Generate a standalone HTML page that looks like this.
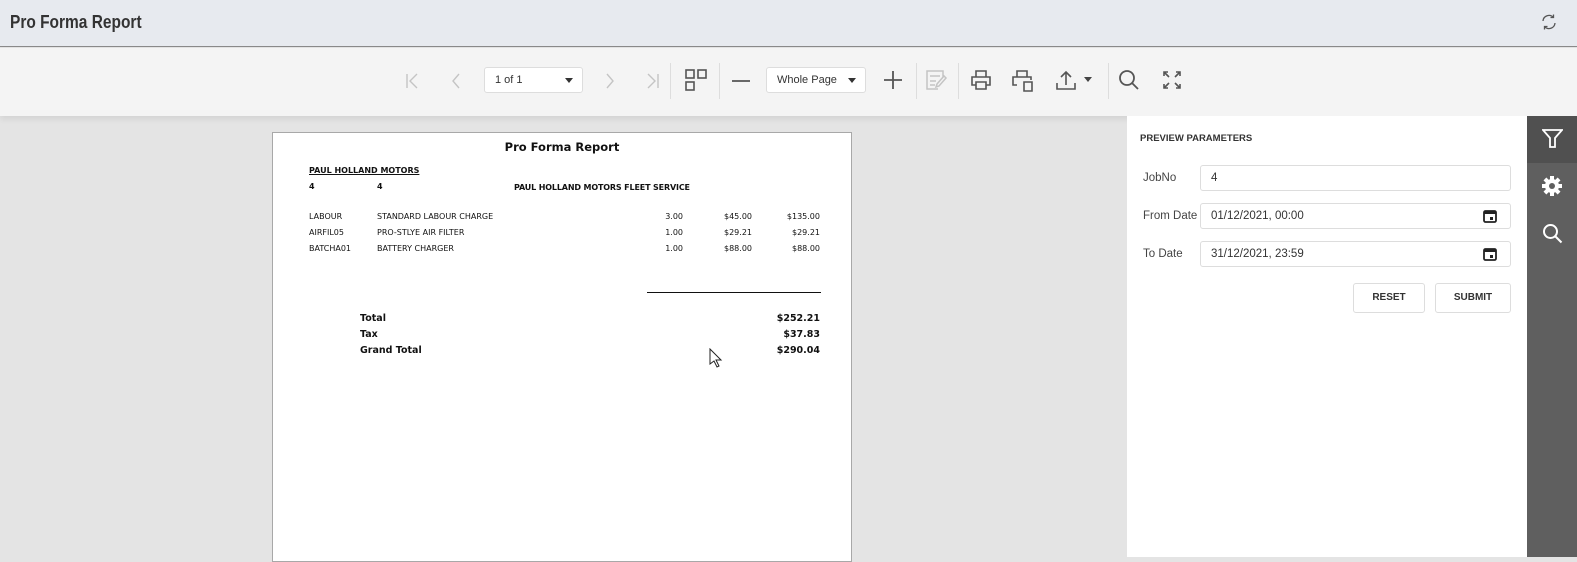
<!DOCTYPE html>
<html><head><meta charset="utf-8"><style>
*{margin:0;padding:0;box-sizing:border-box}
body{width:1577px;height:557px;overflow:hidden;position:relative;background:#e4e4e4;font-family:"Liberation Sans",sans-serif;color:#333}
.a{position:absolute}
#title{left:0;top:0;width:1577px;height:47px;background:#e7eaef;border-bottom:1px solid #8a8a8a}
#title span{position:absolute;left:10px;top:12px;font-size:18px;font-weight:bold;color:#333;transform:scaleX(.86);transform-origin:left;white-space:nowrap}
#tb{left:0;top:48px;width:1577px;height:68px;background:#f4f4f4;box-shadow:0 3px 6px rgba(0,0,0,.08)}
.sel{position:absolute;top:19px;height:26px;background:#fff;border:1px solid #ddd;border-radius:3px;font-size:11px;padding:6px 10px;color:#333}
.sel:after{content:"";position:absolute;right:9px;top:10px;border:4px solid transparent;border-top:5px solid #333}
.sep{position:absolute;top:15px;width:1px;height:36px;background:#ddd}
svg.i{position:absolute}
#page{left:272px;top:132px;width:580px;height:430px;background:#fff;border:1px solid #a8a8a8}
.r{position:absolute;font-family:"DejaVu Sans",sans-serif;font-size:8px;color:#111;white-space:nowrap}
.b{font-weight:bold}
.rt{text-align:right}
#panel{left:1127px;top:116px;width:400px;height:441px;background:#fff}
.lab{position:absolute;left:16px;font-size:11.5px;color:#444}
.inp{position:absolute;left:73px;width:311px;height:26px;border:1px solid #ddd;border-radius:3px;font-size:11.5px;padding:6px 10px;color:#333}
.btn{position:absolute;top:167px;height:30px;border:1px solid #ddd;border-radius:3px;font-size:10px;font-weight:bold;text-align:center;line-height:28px;color:#333}
#side{left:1527px;top:116px;width:50px;height:441px;background:#5f5f5f}
</style></head><body>
<div id="title" class="a"><span>Pro Forma Report</span>
<svg class="i" style="left:1540px;top:13px" width="18" height="18" viewBox="0 0 18 18" fill="none" stroke="#555" stroke-width="1.3"><path d="M3 8a6 6 0 0 1 10.5-3.5M15 10a6 6 0 0 1-10.5 3.5"/><path d="M13.5 1.5v3h-3M4.5 16.5v-3h3"/></svg>
</div>
<div id="tb" class="a">
<svg class="i" style="left:405px;top:24px" width="16" height="18" viewBox="0 0 16 18" fill="none" stroke="#c4c4c4" stroke-width="1.4"><path d="M2 2v14M12 2L5 9l7 7"/></svg>
<svg class="i" style="left:450px;top:24px" width="12" height="18" viewBox="0 0 12 18" fill="none" stroke="#c4c4c4" stroke-width="1.4"><path d="M9 2L3 9l6 7"/></svg>
<div class="sel" style="left:484px;width:99px">1 of 1</div>
<svg class="i" style="left:604px;top:24px" width="12" height="18" viewBox="0 0 12 18" fill="none" stroke="#c4c4c4" stroke-width="1.4"><path d="M3 2l6 7-6 7"/></svg>
<svg class="i" style="left:644px;top:24px" width="16" height="18" viewBox="0 0 16 18" fill="none" stroke="#c4c4c4" stroke-width="1.4"><path d="M14 2v14M4 2l7 7-7 7"/></svg>
<div class="sep" style="left:670px"></div>
<svg class="i" style="left:684px;top:20px" width="24" height="24" viewBox="0 0 24 24" fill="none" stroke="#555" stroke-width="1.6"><rect x="2" y="2" width="8" height="8"/><rect x="14" y="2" width="8" height="8"/><rect x="2" y="14" width="8" height="8"/></svg>
<div class="sep" style="left:719px"></div>
<svg class="i" style="left:731px;top:24px" width="20" height="18" viewBox="0 0 20 18" stroke="#555" stroke-width="1.8"><path d="M1 9h18"/></svg>
<div class="sel" style="left:766px;width:100px">Whole Page</div>
<svg class="i" style="left:883px;top:22px" width="20" height="20" viewBox="0 0 20 20" stroke="#555" stroke-width="1.8"><path d="M1 10h18M10 1v18"/></svg>
<div class="sep" style="left:916px"></div>
<svg class="i" style="left:925px;top:21px" width="24" height="22" viewBox="0 0 24 22" fill="none" stroke="#c4c4c4" stroke-width="1.5"><path d="M13 20H2V2h16v6M5 7h10M5 12h6M5 16h5M21 9l-7 8-3 1 1-3 7-8z"/></svg>
<div class="sep" style="left:958px"></div>
<svg class="i" style="left:970px;top:21px" width="22" height="22" viewBox="0 0 22 22" fill="none" stroke="#555" stroke-width="1.6"><path d="M6 8V2h10v6M6 16H2V8h18v8h-4M6 13h10v7H6z"/></svg>
<svg class="i" style="left:1012px;top:21px" width="24" height="24" viewBox="0 0 24 24" fill="none" stroke="#555" stroke-width="1.6"><path d="M5 8V2h10v6M5 16H1V8h18v3M12 13h8v9h-8z"/></svg>
<svg class="i" style="left:1055px;top:21px" width="24" height="22" viewBox="0 0 24 22" fill="none" stroke="#555" stroke-width="1.6"><path d="M2 14v6h18v-6M11 16V3M6 8l5-5 5 5"/></svg>
<svg class="i" style="left:1084px;top:29px" width="8" height="6" viewBox="0 0 8 6"><path d="M0 0h8L4 5z" fill="#444"/></svg>
<div class="sep" style="left:1108px"></div>
<svg class="i" style="left:1118px;top:21px" width="22" height="22" viewBox="0 0 22 22" fill="none" stroke="#555" stroke-width="1.8"><circle cx="9" cy="9" r="7"/><path d="M14 14l6 6"/></svg>
<svg class="i" style="left:1162px;top:22px" width="20" height="20" viewBox="0 0 20 20" fill="none" stroke="#555" stroke-width="1.6"><path d="M2 6V2h4M2 2l5 5M18 6V2h-4M18 2l-5 5M2 14v4h4M2 18l5-5M18 14v4h-4M18 18l-5-5"/></svg>
</div>

<div id="page" class="a">
<div class="r b" style="left:0;width:578px;text-align:center;top:7px;font-size:11.5px">Pro Forma Report</div>
<div class="r b" style="left:36px;top:33px;text-decoration:underline">PAUL HOLLAND MOTORS</div>
<div class="r b" style="left:36px;top:49px">4</div>
<div class="r b" style="left:104px;top:49px">4</div>
<div class="r b" style="left:241px;top:50px;letter-spacing:-0.15px">PAUL HOLLAND MOTORS FLEET SERVICE</div>
<div class="r" style="left:36px;top:79px">LABOUR</div><div class="r" style="left:104px;top:79px">STANDARD LABOUR CHARGE</div>
<div class="r rt" style="right:168px;top:79px">3.00</div><div class="r rt" style="right:99px;top:79px">$45.00</div><div class="r rt" style="right:31px;top:79px">$135.00</div>
<div class="r" style="left:36px;top:95px">AIRFIL05</div><div class="r" style="left:104px;top:95px">PRO-STLYE AIR FILTER</div>
<div class="r rt" style="right:168px;top:95px">1.00</div><div class="r rt" style="right:99px;top:95px">$29.21</div><div class="r rt" style="right:31px;top:95px">$29.21</div>
<div class="r" style="left:36px;top:111px">BATCHA01</div><div class="r" style="left:104px;top:111px">BATTERY CHARGER</div>
<div class="r rt" style="right:168px;top:111px">1.00</div><div class="r rt" style="right:99px;top:111px">$88.00</div><div class="r rt" style="right:31px;top:111px">$88.00</div>
<div class="a" style="left:374px;top:159px;width:174px;height:1px;background:#111"></div>
<div class="r b" style="left:87px;top:180px;font-size:9.5px">Total</div><div class="r b rt" style="right:31px;top:180px;font-size:9.5px">$252.21</div>
<div class="r b" style="left:87px;top:196px;font-size:9.5px">Tax</div><div class="r b rt" style="right:31px;top:196px;font-size:9.5px">$37.83</div>
<div class="r b" style="left:87px;top:212px;font-size:9.5px">Grand Total</div><div class="r b rt" style="right:31px;top:212px;font-size:9.5px">$290.04</div>
<svg class="a" style="left:436px;top:215px" width="14" height="20" viewBox="0 0 14 20"><path d="M1 1v15l4-3 3 6 2-1-3-6h5z" fill="#fff" stroke="#222" stroke-width="1"/></svg>
</div>

<div id="panel" class="a">
<div class="a" style="left:13px;top:17px;font-size:9.5px;font-weight:bold;color:#333">PREVIEW PARAMETERS</div>
<div class="lab" style="top:56px">JobNo</div><div class="inp" style="top:49px">4</div>
<div class="lab" style="top:94px">From Date</div><div class="inp" style="top:87px">01/12/2021, 00:00</div>
<div class="lab" style="top:132px">To Date</div><div class="inp" style="top:125px">31/12/2021, 23:59</div>
<svg class="a" style="left:356px;top:93px" width="14" height="14" viewBox="0 0 14 14"><rect x="1" y="2" width="12" height="11" rx="1.5" fill="none" stroke="#222" stroke-width="1.8"/><rect x="1" y="2" width="12" height="3" fill="#222"/><rect x="7" y="8" width="3" height="3" fill="#222"/></svg>
<svg class="a" style="left:356px;top:131px" width="14" height="14" viewBox="0 0 14 14"><rect x="1" y="2" width="12" height="11" rx="1.5" fill="none" stroke="#222" stroke-width="1.8"/><rect x="1" y="2" width="12" height="3" fill="#222"/><rect x="7" y="8" width="3" height="3" fill="#222"/></svg>
<div class="btn" style="left:226px;width:72px">RESET</div>
<div class="btn" style="left:308px;width:76px">SUBMIT</div>
</div>

<div id="side" class="a">
<div class="a" style="left:0;top:0;width:50px;height:47px;background:#505050"></div>
<svg class="a" style="left:15px;top:12px" width="21" height="22" viewBox="0 0 21 22" fill="none" stroke="#fff" stroke-width="1.8"><path d="M1 2h19l-7 8v9h-5v-9z"/></svg>
<svg class="a" style="left:14px;top:59px" width="22" height="22" viewBox="0 0 22 22"><g fill="#fff"><circle cx="11" cy="11" r="7"/><rect x="9" y="1" width="4" height="20"/><rect x="1" y="9" width="20" height="4"/><rect x="9" y="1" width="4" height="20" transform="rotate(45 11 11)"/><rect x="9" y="1" width="4" height="20" transform="rotate(-45 11 11)"/></g><circle cx="11" cy="11" r="3" fill="#5f5f5f"/></svg>
<svg class="a" style="left:15px;top:107px" width="21" height="21" viewBox="0 0 21 21" fill="none" stroke="#fff" stroke-width="2"><circle cx="8.5" cy="8.5" r="6.5"/><path d="M13 13l6.5 6.5"/></svg>
</div>
</body></html>
